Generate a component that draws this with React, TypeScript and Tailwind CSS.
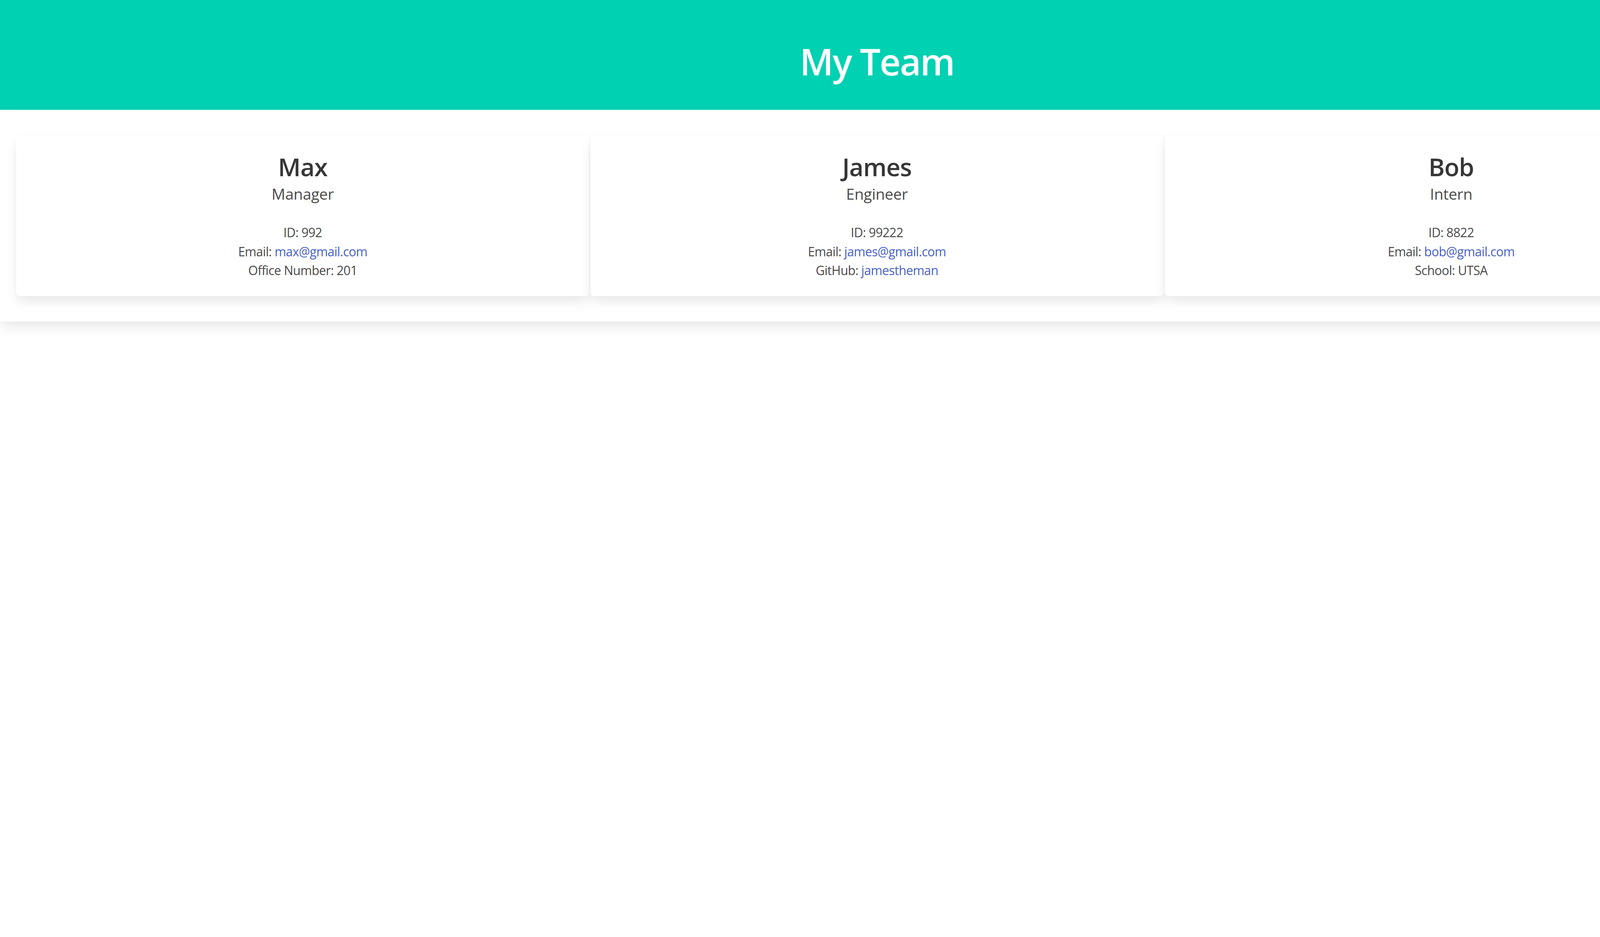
import React from "react";

type Member = {
  name: string;
  role: string;
  id: string;
  email: string;
  extraLabel: string;
  extraValue: string;
  extraIsLink?: boolean;
};

const members: Member[] = [
  { name: "Max", role: "Manager", id: "992", email: "max@gmail.com", extraLabel: "Office Number", extraValue: "201" },
  { name: "James", role: "Engineer", id: "99222", email: "james@gmail.com", extraLabel: "GitHub", extraValue: "jamestheman", extraIsLink: true },
  { name: "Bob", role: "Intern", id: "8822", email: "bob@gmail.com", extraLabel: "School", extraValue: "UTSA" },
];

function Card({ m }: { m: Member }) {
  return (
    <div className="w-[1468px] shrink-0 rounded-[10px] bg-white pt-[38px] pb-[41px] text-center shadow-[0_16px_32px_-4px_rgba(10,10,10,0.1),0_0_0_1px_rgba(10,10,10,0.02)]">
      <h2 className="text-[63px] leading-[85px] font-semibold tracking-[-1px] text-[#363636]">{m.name}</h2>
      <p className="text-[39px] leading-[53px] font-normal tracking-[-0.3px] text-[#4a4a4a]">{m.role}</p>
      <div className="mt-[49px] text-[32px] leading-[48.5px] tracking-[-0.7px] text-[#4a4a4a]">
        <p>ID: {m.id}</p>
        <p>
          Email: <a className="text-[#485fc7]">{m.email}</a>
        </p>
        <p>
          {m.extraLabel}:{" "}
          {m.extraIsLink ? <a className="text-[#485fc7]">{m.extraValue}</a> : m.extraValue}
        </p>
      </div>
    </div>
  );
}

export default function App() {
  return (
    <div className="min-h-screen w-full overflow-hidden bg-white font-['Open_Sans',sans-serif]">
      <div className="w-[4490px]">
        <header className="h-[281px] bg-[#00d1b2] pt-[93px] text-center">
          <h1 className="text-[94px] leading-[128px] font-semibold tracking-[-2.5px] text-white">My Team</h1>
        </header>
        <section className="bg-white px-[41px] py-[65px] shadow-[0_16px_32px_-4px_rgba(10,10,10,0.1),0_0_0_1px_rgba(10,10,10,0.02)]">
          <div className="flex gap-[2px]">
            {members.map((m) => (
              <Card key={m.name} m={m} />
            ))}
          </div>
        </section>
      </div>
    </div>
  );
}
